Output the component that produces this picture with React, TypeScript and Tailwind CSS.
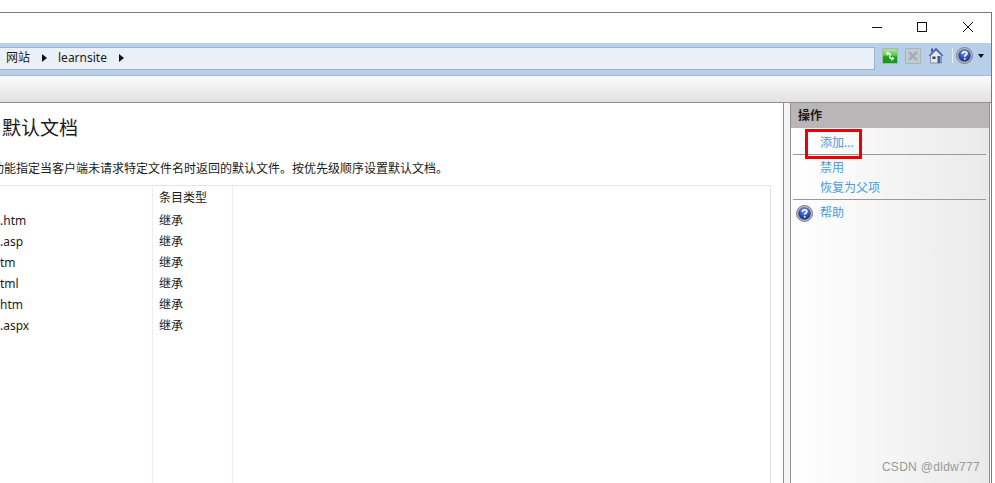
const rows = ['.htm', '.asp', 'tm', 'tml', 'htm', '.aspx'];

function HelpIcon({ id }: { id: string }) {
  return (
    <svg width="17" height="17" viewBox="0 0 17 17" className="shrink-0">
      <defs>
        <radialGradient id={id} cx="50%" cy="30%" r="75%">
          <stop offset="0%" stopColor="#7d9be8" />
          <stop offset="60%" stopColor="#2a4cb4" />
          <stop offset="100%" stopColor="#16308c" />
        </radialGradient>
      </defs>
      <circle cx="8.5" cy="8.5" r="8" fill="#b5b8bd" stroke="#7c8087" strokeWidth="1" />
      <circle cx="8.5" cy="8.5" r="6.2" fill={`url(#${id})`} />
      <path d="M6.2 6.8c0-1.3 1.1-2 2.4-2 1.3 0 2.3.7 2.3 1.8 0 1.6-2.2 1.6-2.2 3.2" fill="none" stroke="#fff" strokeWidth="1.6" />
      <rect x="7.9" y="11" width="1.6" height="1.6" fill="#fff" />
    </svg>
  );
}

function Caret() {
  return (
    <svg width="5" height="8" viewBox="0 0 5 8" className="shrink-0">
      <path d="M0 0l5 4-5 4z" fill="#111" />
    </svg>
  );
}

export default function App() {
  return (
    <div className="w-[995px] h-[483px] overflow-hidden bg-white text-[12px] text-[#1a1a1a]" style={{ fontFamily: '"Noto Sans", "Noto Sans CJK SC", sans-serif' }}>
      <div className="h-[12px]" />
      <div className="w-[992px] h-[471px] flex flex-col border-t border-r border-[#7a7a7a]">
        {/* Title bar */}
        <div className="h-[30px] flex justify-end items-center shrink-0 pb-[3px]">
          <svg width="104" height="14" viewBox="0 0 104 14" className="mr-[17px]">
            <path d="M2 7.5h10" stroke="#111" strokeWidth="1" />
            <rect x="47.5" y="2.5" width="9" height="9" fill="none" stroke="#111" strokeWidth="1" />
            <path d="M93 2l10 10M103 2l-10 10" stroke="#111" strokeWidth="1" />
          </svg>
        </div>

        {/* Address bar */}
        <div className="h-[33px] shrink-0 bg-[#b7cfe9] border-b border-[#a3b9d2] flex items-center">
          <div className="w-[875px] h-[23px] mb-[2px] bg-[#e9f0f8] border border-[#9db2cb] border-l-0 flex items-center pl-[6px] gap-[12px]">
            <span>网站</span>
            <Caret />
            <span className="-ml-[1px]">learnsite</span>
            <Caret />
          </div>
          <div className="flex items-center ml-[7px] mb-[7px]">
            <svg width="16" height="16" viewBox="0 0 16 16">
              <defs>
                <linearGradient id="green-btn" x1="0" y1="0" x2="0" y2="1">
                  <stop offset="0%" stopColor="#b5e6a8" />
                  <stop offset="45%" stopColor="#5cc94f" />
                  <stop offset="55%" stopColor="#12a812" />
                  <stop offset="100%" stopColor="#0c9a20" />
                </linearGradient>
              </defs>
              <rect x="0.5" y="0.5" width="15" height="15" fill="url(#green-btn)" stroke="#a9b8a4" />
              <path d="M7 2.5L3.5 5.5 6 7.5V6.2c1 0 1.5.5 1.5 1.5H9C9 5.8 8 4.6 6 4.6z" fill="#fff" />
              <path d="M9 13.5l3.5-3-2.5-2v1.3c-1 0-1.5-.5-1.5-1.5H7c0 1.9 1 3.1 3 3.1z" fill="#fff" />
            </svg>
            <svg width="16" height="16" viewBox="0 0 16 16" className="ml-[7px]">
              <rect x="0.5" y="0.5" width="15" height="15" rx="1" fill="#c3cad2" stroke="#a8b2bd" />
              <path d="M4 4l8 8M12 4l-8 8" stroke="#a3acb6" strokeWidth="2.4" />
            </svg>
            <svg width="16" height="17" viewBox="0 0 16 17" className="ml-[7px]">
              <path d="M8 1L1 8.5h1.5V16h11V8.5H15z" fill="#e8e6e2" stroke="#6d7f9c" strokeWidth="0.8" />
              <path d="M8 1L1 8.5l1.5.4L8 3.6l5.5 5.3 1.5-.4z" fill="#4a63c0" />
              <path d="M3 1.5h2v2l-2 2z" fill="#3a55b8" />
              <rect x="4.5" y="9.5" width="3" height="2.5" fill="#33445f" />
              <rect x="9.5" y="9" width="3" height="7" fill="#2f5da8" />
            </svg>
            <div className="w-[1px] h-[15px] bg-[#e8eff7] ml-[8px]" />
            <div className="ml-[3px]"><HelpIcon id="help-top" /></div>
            <svg width="6" height="4" viewBox="0 0 6 4" className="ml-[5px]">
              <path d="M0 0h6L3 4z" fill="#111" />
            </svg>
          </div>
        </div>

        {/* Toolbar strip */}
        <div className="h-[27px] shrink-0 bg-gradient-to-b from-[#fbfbfb] to-[#e3e1e1] border-b border-[#8f8f8f]" />

        <div className="flex-1 flex min-h-0">
          {/* Main panel */}
          <div className="w-[784px] shrink-0 border-r border-[#8f8f8f] overflow-hidden pr-[12px]">
            <h1 className="text-[19px] leading-[27px] mt-[12px] ml-[2px] font-normal">默认文档</h1>
            <p className="mt-[19px] -ml-[8px] leading-[16px] whitespace-nowrap">功能指定当客户端未请求特定文件名时返回的默认文件。按优先级顺序设置默认文档。</p>
            <div className="mt-[8px] h-[300px] border-t border-r border-[#e3e3e3] flex">
              <div className="w-[153px] shrink-0 border-r border-[#e6eef8] pt-[24px]">
                {rows.map((r) => (
                  <div key={r} className="h-[21px] leading-[21px]">{r}</div>
                ))}
              </div>
              <div className="w-[80px] shrink-0 border-r border-[#e6eef8] pl-[6px]">
                <div className="h-[24px] leading-[23px]">条目类型</div>
                {rows.map((r) => (
                  <div key={r} className="h-[21px] leading-[21px]">继承</div>
                ))}
              </div>
            </div>
          </div>

          <div className="w-[6px] shrink-0 bg-[#f4f4f4]" />

          {/* Actions panel */}
          <div className="relative flex-1 min-w-0 border-l border-r border-[#8f8f8f] bg-gradient-to-r from-white to-[#eaeaea] flex flex-col mr-[1px]">
            <div className="h-[25px] bg-[#b9b6b8] flex items-center pl-[7px] font-bold">操作</div>
            <div className="pl-[29px] pt-[5px] text-[#4a9bdc] leading-[20px]">添加...</div>
            <div className="h-[1px] bg-[#9a9a9a] ml-[2px] mr-[3px] mt-[1px]" />
            <div className="pl-[29px] mt-[3px] text-[#4a9bdc] leading-[20px]">禁用</div>
            <div className="pl-[29px] text-[#4a9bdc] leading-[20px]">恢复为父项</div>
            <div className="h-[1px] bg-[#9a9a9a] ml-[2px] mr-[3px] mt-[1px]" />
            <div className="flex items-center pl-[5px] gap-[7px] mt-[3px] text-[#4a9bdc] leading-[20px]">
              <HelpIcon id="help-side" />
              <span>帮助</span>
            </div>
            <div className="mt-auto mb-[7px] mr-[9px] text-right text-[12px] text-[#9a9a9a] tracking-[0.3px]" style={{ fontFamily: '"Liberation Sans", sans-serif' }}>CSDN @dldw777</div>
            {/* Red annotation box */}
            <div className="absolute left-[14px] top-[26px] w-[57px] h-[30px] border-[3px] border-[#f00000]" />
          </div>
        </div>
      </div>
    </div>
  );
}
